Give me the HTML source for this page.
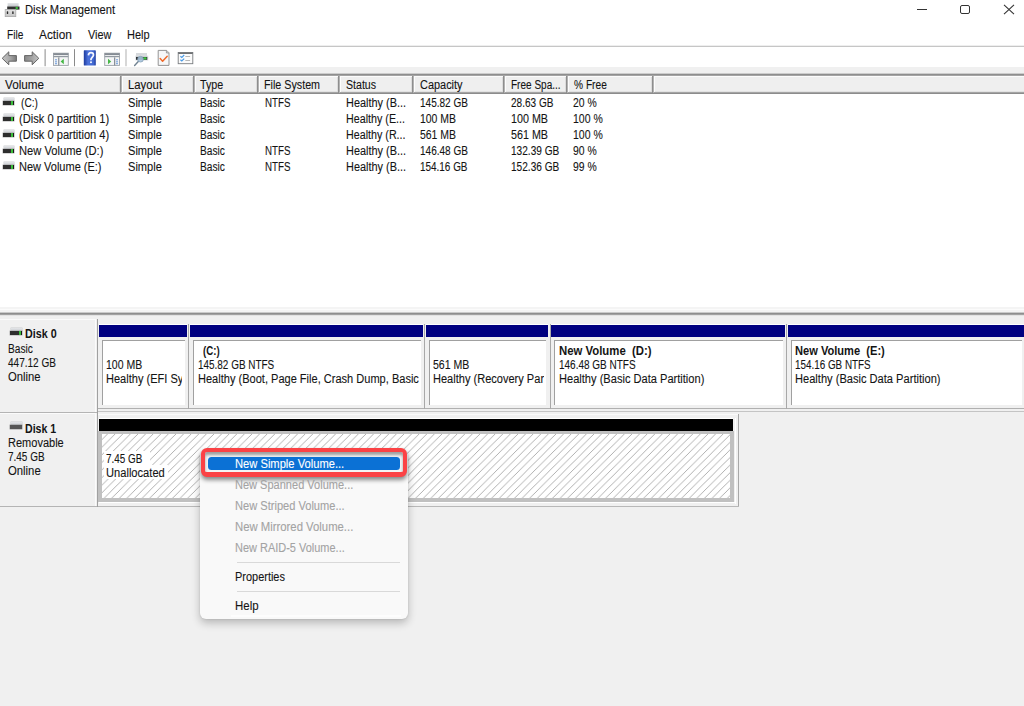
<!DOCTYPE html>
<html><head><meta charset="utf-8">
<style>
*{margin:0;padding:0;box-sizing:border-box}
html,body{width:1024px;height:706px;overflow:hidden;background:#f0f0f0;font-family:"Liberation Sans",sans-serif;color:#000}
.a{position:absolute}
.t{position:absolute;font-size:12px;line-height:14px;white-space:pre;color:#141414;-webkit-text-stroke:0.1px currentColor}
.drv{position:absolute;width:11px;height:7px}
.drv:before{content:"";position:absolute;left:0.5px;top:0;width:10px;height:3.4px;background:linear-gradient(#e4e6e9,#c9ccd0);box-shadow:0 0 0 0.4px #c0c3c6}
.drv:after{content:"";position:absolute;left:0;top:3.4px;width:11px;height:3.6px;background:linear-gradient(90deg,#2e2e2e 0,#2e2e2e 72%,#3bbd3b 72%,#3bbd3b 89%,#1a1a1a 89%);box-shadow:0 0 0 0.4px #9a9a9a}
.drv.rm:after{background:#555;box-shadow:0 0 0 0.4px #8a8a8a}
.drv.lb{width:12px}
.drv.lb:before{width:11px}
.drv.lb:after{width:12px}
</style></head>
<body>
<div class="a" style="left:0px;top:0px;width:1024px;height:46px;background:#fff;"></div>
<div class="t" style="left:25.40px;top:3.24px;transform:scaleX(0.9313);transform-origin:0 0;">Disk Management</div>
<div class="a" style="left:917px;top:9px;width:10px;height:1px;background:#333;"></div>
<div class="a" style="left:960px;top:5px;width:10px;height:9px;border:1px solid #333;border-radius:2px"></div>
<svg class="a" style="left:1003px;top:4px" width="12" height="11"><path d="M1 0.8L11 10.2M11 0.8L1 10.2" stroke="#333" stroke-width="1.1"/></svg>
<svg class="a" style="left:4px;top:2px" width="17" height="16" viewBox="0 0 17 16">
<defs><linearGradient id="tg" x1="0" y1="0" x2="0" y2="1"><stop offset="0" stop-color="#e6e8ea"/><stop offset="1" stop-color="#c2c5c9"/></linearGradient>
<linearGradient id="bg2" x1="0" y1="0" x2="0" y2="1"><stop offset="0" stop-color="#e2e2e2"/><stop offset="1" stop-color="#c4c4c4"/></linearGradient></defs>
<rect x="3.6" y="1" width="11" height="3.5" fill="url(#tg)"/>
<rect x="3.2" y="4.5" width="12.3" height="3.1" fill="#303030"/>
<rect x="11.6" y="4.9" width="2.2" height="2.4" fill="#3ab83a"/>
<rect x="1.2" y="7.6" width="10.6" height="7" fill="url(#bg2)" stroke="#a8a8a8" stroke-width="0.8"/>
<rect x="2.8" y="9.2" width="1.4" height="2.8" rx="0.6" fill="#2a2a2a"/>
<rect x="8.2" y="9.2" width="1.4" height="2.8" rx="0.6" fill="#2a2a2a"/>
</svg>
<div class="t" style="left:7.00px;top:28.14px;transform:scaleX(0.8465);transform-origin:0 0;">File</div>
<div class="t" style="left:39.00px;top:28.14px;transform:scaleX(0.9858);transform-origin:0 0;">Action</div>
<div class="t" style="left:87.50px;top:28.14px;transform:scaleX(0.9082);transform-origin:0 0;">View</div>
<div class="t" style="left:126.60px;top:28.14px;transform:scaleX(0.9178);transform-origin:0 0;">Help</div>
<div class="a" style="left:0px;top:45px;width:1024px;height:1px;background:#eeeeee;"></div>
<div class="a" style="left:0px;top:46px;width:1024px;height:1px;background:#c6c6c6;"></div>
<div class="a" style="left:0px;top:47px;width:1024px;height:20px;background:#fff;"></div>
<div class="a" style="left:0px;top:67px;width:1024px;height:7px;background:#f0f0f0;"></div>
<div class="a" style="left:0px;top:73px;width:1024px;height:1px;background:#cccccc;"></div>
<div class="a" style="left:0px;top:74px;width:1024px;height:1px;background:#8e8e8e;"></div>
<div class="a" style="left:0px;top:75px;width:1024px;height:1px;background:#a4a4a4;"></div>
<svg class="a" style="left:0;top:47px" width="200" height="21" viewBox="0 47 200 21">
<defs>
<linearGradient id="agl" x1="0" y1="0" x2="1" y2="0"><stop offset="0" stop-color="#c4c4c4"/><stop offset="0.55" stop-color="#a8a8a8"/><stop offset="1" stop-color="#7a7a7a"/></linearGradient>
<linearGradient id="agr" x1="0" y1="0" x2="1" y2="0"><stop offset="0" stop-color="#8a8a8a"/><stop offset="0.45" stop-color="#a0a0a0"/><stop offset="1" stop-color="#c4c4c4"/></linearGradient>
<linearGradient id="ag" x1="0" y1="0" x2="0" y2="1"><stop offset="0" stop-color="#b4b4b4"/><stop offset="0.5" stop-color="#8e8e8e"/><stop offset="1" stop-color="#a8a8a8"/></linearGradient>
<linearGradient id="hg" x1="0" y1="0" x2="1" y2="0"><stop offset="0" stop-color="#1c3a9c"/><stop offset="0.35" stop-color="#4c72dc"/><stop offset="0.8" stop-color="#4068d0"/><stop offset="1" stop-color="#1f3c9e"/></linearGradient>
</defs>
<path d="M2.2 58.3L8.8 51.8V55.6H16.4V61.2H8.8V64.8Z" fill="url(#agl)" stroke="#666" stroke-width="1" stroke-linejoin="round"/>
<path d="M38.8 58.3L32.2 51.8V55.6H24.6V61.2H32.2V64.8Z" fill="url(#agr)" stroke="#666" stroke-width="1" stroke-linejoin="round"/>
<rect x="44.6" y="49.2" width="1" height="17" fill="#8a8a8a"/>
<g>
<rect x="53.5" y="53.2" width="14.8" height="12.2" fill="#f4f5f6" stroke="#9ca2a8" stroke-width="0.9"/>
<rect x="53.5" y="53.2" width="14.8" height="1.8" fill="#848b93"/>
<rect x="53.5" y="55.9" width="14.8" height="1.3" fill="#9299a1"/>
<rect x="58.3" y="57.4" width="1" height="8" fill="#6f7781"/>
<rect x="55" y="59.4" width="2" height="0.9" fill="#5b8fd6"/>
<rect x="55" y="61.4" width="2" height="0.9" fill="#5b8fd6"/>
<rect x="55" y="63.3" width="2" height="0.9" fill="#5b8fd6"/>
<path d="M60.6 61.5L63.8 58.8V64.2Z" fill="#46b846"/>
</g>
<rect x="74" y="49.2" width="1" height="17" fill="#8a8a8a"/>
<rect x="83.8" y="50.3" width="12" height="15.2" rx="0.6" fill="url(#hg)"/>
<path d="M88.4 55.4C88.5 53.5 89.7 52.6 91 52.6C92.5 52.6 93.5 53.6 93.5 55C93.5 56.7 91.2 57.3 91 59.2V60.3" fill="none" stroke="#f4f6ff" stroke-width="1.7"/>
<circle cx="91" cy="62.3" r="1.05" fill="#f4f6ff"/>
<g>
<rect x="104.7" y="53.2" width="14.8" height="12.2" fill="#f4f5f6" stroke="#9ca2a8" stroke-width="0.9"/>
<rect x="104.7" y="53.2" width="14.8" height="1.8" fill="#848b93"/>
<rect x="104.7" y="55.9" width="14.8" height="1.3" fill="#9299a1"/>
<rect x="114.2" y="57.4" width="1" height="8" fill="#6f7781"/>
<rect x="116" y="59.4" width="2" height="0.9" fill="#5b8fd6"/>
<rect x="116" y="61.4" width="2" height="0.9" fill="#5b8fd6"/>
<rect x="116" y="63.3" width="2" height="0.9" fill="#5b8fd6"/>
<path d="M111.2 61.5L108 58.8V64.2Z" fill="#46b846"/>
</g>
<rect x="125.5" y="49.2" width="1" height="17" fill="#b0b0b0"/>
<g>
<rect x="136" y="53" width="11" height="3.2" fill="#d6d9dc"/>
<rect x="135.3" y="55.6" width="13" height="5" fill="#dfe2e5"/>
<rect x="136" y="56.9" width="11.3" height="2.9" fill="#2f3336"/>
<rect x="143.2" y="57.3" width="3.4" height="2.1" rx="0.8" fill="#3cc83c"/>
<line x1="138.3" y1="61.5" x2="134.6" y2="65.4" stroke="#718392" stroke-width="1.4" stroke-linecap="round"/>
<circle cx="140.5" cy="59.2" r="2.9" fill="#a7c4dc" fill-opacity="0.88" stroke="#7591aa" stroke-width="0.6"/>
</g>
<g>
<path d="M158.2 50.4H166.6L169 52.8V65.4H158.2Z" fill="#f6f7f8" stroke="#8a8a8a" stroke-width="0.9"/>
<path d="M166.4 50.4V53H169" fill="#d0d0d0" stroke="#8a8a8a" stroke-width="0.7"/>
<path d="M160.2 58.6L162.6 61.2L167.2 56.2" fill="none" stroke="#f06a2a" stroke-width="1.5" stroke-linecap="round" stroke-linejoin="round"/>
</g>
<g>
<rect x="178.2" y="52.5" width="14.6" height="11.2" fill="#fbfbfb" stroke="#7a7d80" stroke-width="0.9"/>
<rect x="178.2" y="52.5" width="14.6" height="1.5" fill="#6d7073"/>
<path d="M180.4 56.2L181.8 57.4L184.2 55" fill="none" stroke="#4a9be6" stroke-width="1.2"/>
<path d="M180.4 59.8L181.8 61L184.2 58.6" fill="none" stroke="#4a9be6" stroke-width="1.2"/>
<rect x="185.3" y="56.2" width="4.8" height="0.7" fill="#9a9a9a"/>
<rect x="185.3" y="60" width="4.8" height="0.7" fill="#9a9a9a"/>
</g>
</svg>
<div class="a" style="left:0px;top:76px;width:1024px;height:17px;background:#efefef;"></div>
<div class="a" style="left:0px;top:76px;width:1024px;height:1px;background:#fcfcfc;"></div>
<div class="a" style="left:0px;top:91px;width:1024px;height:1px;background:#e2e2e2;"></div>
<div class="a" style="left:0px;top:92px;width:1024px;height:1px;background:#a4a4a4;"></div>
<div class="a" style="left:0px;top:93px;width:1024px;height:1px;background:#8c8c8c;"></div>
<div class="a" style="left:119px;top:77px;width:1px;height:15px;background:#dcdcdc;"></div>
<div class="a" style="left:120px;top:76px;width:1px;height:17px;background:#8e8e8e;"></div>
<div class="a" style="left:121px;top:76px;width:1px;height:17px;background:#b4b4b4;"></div>
<div class="a" style="left:122px;top:77px;width:1px;height:15px;background:#fdfdfd;"></div>
<div class="a" style="left:192px;top:77px;width:1px;height:15px;background:#dcdcdc;"></div>
<div class="a" style="left:193px;top:76px;width:1px;height:17px;background:#8e8e8e;"></div>
<div class="a" style="left:194px;top:76px;width:1px;height:17px;background:#b4b4b4;"></div>
<div class="a" style="left:195px;top:77px;width:1px;height:15px;background:#fdfdfd;"></div>
<div class="a" style="left:256px;top:77px;width:1px;height:15px;background:#dcdcdc;"></div>
<div class="a" style="left:257px;top:76px;width:1px;height:17px;background:#8e8e8e;"></div>
<div class="a" style="left:258px;top:76px;width:1px;height:17px;background:#b4b4b4;"></div>
<div class="a" style="left:259px;top:77px;width:1px;height:15px;background:#fdfdfd;"></div>
<div class="a" style="left:337px;top:77px;width:1px;height:15px;background:#dcdcdc;"></div>
<div class="a" style="left:338px;top:76px;width:1px;height:17px;background:#8e8e8e;"></div>
<div class="a" style="left:339px;top:76px;width:1px;height:17px;background:#b4b4b4;"></div>
<div class="a" style="left:340px;top:77px;width:1px;height:15px;background:#fdfdfd;"></div>
<div class="a" style="left:411px;top:77px;width:1px;height:15px;background:#dcdcdc;"></div>
<div class="a" style="left:412px;top:76px;width:1px;height:17px;background:#8e8e8e;"></div>
<div class="a" style="left:413px;top:76px;width:1px;height:17px;background:#b4b4b4;"></div>
<div class="a" style="left:414px;top:77px;width:1px;height:15px;background:#fdfdfd;"></div>
<div class="a" style="left:502px;top:77px;width:1px;height:15px;background:#dcdcdc;"></div>
<div class="a" style="left:503px;top:76px;width:1px;height:17px;background:#8e8e8e;"></div>
<div class="a" style="left:504px;top:76px;width:1px;height:17px;background:#b4b4b4;"></div>
<div class="a" style="left:505px;top:77px;width:1px;height:15px;background:#fdfdfd;"></div>
<div class="a" style="left:565px;top:77px;width:1px;height:15px;background:#dcdcdc;"></div>
<div class="a" style="left:566px;top:76px;width:1px;height:17px;background:#8e8e8e;"></div>
<div class="a" style="left:567px;top:76px;width:1px;height:17px;background:#b4b4b4;"></div>
<div class="a" style="left:568px;top:77px;width:1px;height:15px;background:#fdfdfd;"></div>
<div class="a" style="left:651px;top:77px;width:1px;height:15px;background:#dcdcdc;"></div>
<div class="a" style="left:652px;top:76px;width:1px;height:17px;background:#8e8e8e;"></div>
<div class="a" style="left:653px;top:76px;width:1px;height:17px;background:#b4b4b4;"></div>
<div class="a" style="left:654px;top:77px;width:1px;height:15px;background:#fdfdfd;"></div>
<div class="t" style="left:4.70px;top:78.14px;transform:scaleX(0.9775);transform-origin:0 0;">Volume</div>
<div class="t" style="left:127.60px;top:78.14px;transform:scaleX(0.9444);transform-origin:0 0;">Layout</div>
<div class="t" style="left:200.20px;top:78.14px;transform:scaleX(0.8962);transform-origin:0 0;">Type</div>
<div class="t" style="left:264.00px;top:78.14px;transform:scaleX(0.8942);transform-origin:0 0;">File System</div>
<div class="t" style="left:346.00px;top:78.14px;transform:scaleX(0.8824);transform-origin:0 0;">Status</div>
<div class="t" style="left:419.60px;top:78.14px;transform:scaleX(0.9112);transform-origin:0 0;">Capacity</div>
<div class="t" style="left:510.70px;top:78.14px;transform:scaleX(0.8354);transform-origin:0 0;">Free Spa...</div>
<div class="t" style="left:573.50px;top:78.14px;transform:scaleX(0.8492);transform-origin:0 0;">% Free</div>
<div class="a" style="left:0px;top:94px;width:1024px;height:213px;background:#fff;"></div>
<div class="drv" style="left:3px;top:98px"></div>
<div class="t" style="left:21.25px;top:96.04px;transform:scaleX(0.8450);transform-origin:0 0;">(C:)</div>
<div class="t" style="left:127.50px;top:96.04px;transform:scaleX(0.9215);transform-origin:0 0;">Simple</div>
<div class="t" style="left:200.20px;top:96.04px;transform:scaleX(0.8477);transform-origin:0 0;">Basic</div>
<div class="t" style="left:264.50px;top:96.04px;transform:scaleX(0.8127);transform-origin:0 0;">NTFS</div>
<div class="t" style="left:346.20px;top:96.04px;transform:scaleX(0.9091);transform-origin:0 0;">Healthy (B...</div>
<div class="t" style="left:419.50px;top:96.04px;transform:scaleX(0.8366);transform-origin:0 0;">145.82 GB</div>
<div class="t" style="left:510.50px;top:96.04px;transform:scaleX(0.8374);transform-origin:0 0;">28.63 GB</div>
<div class="t" style="left:573.30px;top:96.04px;transform:scaleX(0.8676);transform-origin:0 0;">20 %</div>
<div class="drv" style="left:3px;top:114px"></div>
<div class="t" style="left:18.50px;top:112.04px;transform:scaleX(0.9268);transform-origin:0 0;">(Disk 0 partition 1)</div>
<div class="t" style="left:127.50px;top:112.04px;transform:scaleX(0.9215);transform-origin:0 0;">Simple</div>
<div class="t" style="left:200.20px;top:112.04px;transform:scaleX(0.8477);transform-origin:0 0;">Basic</div>
<div class="t" style="left:346.20px;top:112.04px;transform:scaleX(0.8939);transform-origin:0 0;">Healthy (E...</div>
<div class="t" style="left:419.50px;top:112.04px;transform:scaleX(0.8701);transform-origin:0 0;">100 MB</div>
<div class="t" style="left:510.50px;top:112.04px;transform:scaleX(0.8943);transform-origin:0 0;">100 MB</div>
<div class="t" style="left:573.30px;top:112.04px;transform:scaleX(0.8750);transform-origin:0 0;">100 %</div>
<div class="drv" style="left:3px;top:130px"></div>
<div class="t" style="left:18.50px;top:128.04px;transform:scaleX(0.9268);transform-origin:0 0;">(Disk 0 partition 4)</div>
<div class="t" style="left:127.50px;top:128.04px;transform:scaleX(0.9215);transform-origin:0 0;">Simple</div>
<div class="t" style="left:200.20px;top:128.04px;transform:scaleX(0.8477);transform-origin:0 0;">Basic</div>
<div class="t" style="left:346.20px;top:128.04px;transform:scaleX(0.8931);transform-origin:0 0;">Healthy (R...</div>
<div class="t" style="left:419.50px;top:128.04px;transform:scaleX(0.8701);transform-origin:0 0;">561 MB</div>
<div class="t" style="left:510.50px;top:128.04px;transform:scaleX(0.8943);transform-origin:0 0;">561 MB</div>
<div class="t" style="left:573.30px;top:128.04px;transform:scaleX(0.8750);transform-origin:0 0;">100 %</div>
<div class="drv" style="left:3px;top:146px"></div>
<div class="t" style="left:18.75px;top:144.04px;transform:scaleX(0.9300);transform-origin:0 0;">New Volume (D:)</div>
<div class="t" style="left:127.50px;top:144.04px;transform:scaleX(0.9215);transform-origin:0 0;">Simple</div>
<div class="t" style="left:200.20px;top:144.04px;transform:scaleX(0.8477);transform-origin:0 0;">Basic</div>
<div class="t" style="left:264.50px;top:144.04px;transform:scaleX(0.8127);transform-origin:0 0;">NTFS</div>
<div class="t" style="left:346.20px;top:144.04px;transform:scaleX(0.9091);transform-origin:0 0;">Healthy (B...</div>
<div class="t" style="left:419.50px;top:144.04px;transform:scaleX(0.8366);transform-origin:0 0;">146.48 GB</div>
<div class="t" style="left:510.50px;top:144.04px;transform:scaleX(0.8410);transform-origin:0 0;">132.39 GB</div>
<div class="t" style="left:573.30px;top:144.04px;transform:scaleX(0.8676);transform-origin:0 0;">90 %</div>
<div class="drv" style="left:3px;top:162px"></div>
<div class="t" style="left:18.75px;top:160.04px;transform:scaleX(0.9167);transform-origin:0 0;">New Volume (E:)</div>
<div class="t" style="left:127.50px;top:160.04px;transform:scaleX(0.9215);transform-origin:0 0;">Simple</div>
<div class="t" style="left:200.20px;top:160.04px;transform:scaleX(0.8477);transform-origin:0 0;">Basic</div>
<div class="t" style="left:264.50px;top:160.04px;transform:scaleX(0.8127);transform-origin:0 0;">NTFS</div>
<div class="t" style="left:346.20px;top:160.04px;transform:scaleX(0.9091);transform-origin:0 0;">Healthy (B...</div>
<div class="t" style="left:419.50px;top:160.04px;transform:scaleX(0.8279);transform-origin:0 0;">154.16 GB</div>
<div class="t" style="left:510.50px;top:160.04px;transform:scaleX(0.8410);transform-origin:0 0;">152.36 GB</div>
<div class="t" style="left:573.30px;top:160.04px;transform:scaleX(0.8676);transform-origin:0 0;">99 %</div>
<div class="a" style="left:0px;top:307px;width:1024px;height:6px;background:#f4f4f4;"></div>
<div class="a" style="left:0px;top:309px;width:1024px;height:1px;background:#fbfbfb;"></div>
<div class="a" style="left:0px;top:312px;width:1024px;height:1px;background:#cacaca;"></div>
<div class="a" style="left:0px;top:313px;width:1024px;height:1px;background:#8e8e8e;"></div>
<div class="a" style="left:0px;top:314px;width:1024px;height:1px;background:#a2a2a2;"></div>
<div class="a" style="left:0px;top:315px;width:1024px;height:1px;background:#e2e2e2;"></div>
<div class="a" style="left:0px;top:319px;width:96px;height:1px;background:#fbfbfb;"></div>
<div class="a" style="left:95px;top:319px;width:1px;height:93px;background:#fbfbfb;"></div>
<div class="a" style="left:97px;top:319px;width:1px;height:94px;background:#a0a0a0;"></div>
<div class="a" style="left:0px;top:412px;width:97px;height:1px;background:#b4b4b4;"></div>
<div class="drv lb" style="left:10px;top:328px"></div>
<div class="t" style="left:25.30px;top:327.24px;font-weight:bold;-webkit-text-stroke:0;transform:scaleX(0.8961);transform-origin:0 0;">Disk 0</div>
<div class="t" style="left:7.90px;top:341.64px;transform:scaleX(0.8443);transform-origin:0 0;">Basic</div>
<div class="t" style="left:7.50px;top:355.84px;transform:scaleX(0.8366);transform-origin:0 0;">447.12 GB</div>
<div class="t" style="left:8.00px;top:369.94px;transform:scaleX(0.9381);transform-origin:0 0;">Online</div>
<div class="a" style="left:98px;top:408px;width:926px;height:1px;background:#b0b0b0;"></div>
<div class="a" style="left:98px;top:411px;width:926px;height:1px;background:#c4c4c4;"></div>
<div class="a" style="left:99px;top:324px;width:88px;height:1px;background:#fff;"></div>
<div class="a" style="left:99px;top:325px;width:88px;height:12px;background:#000080;"></div>
<div class="a" style="left:102px;top:340px;width:83px;height:65px;background:#fff;border-top:1px solid #a0a0a0;border-left:1px solid #a0a0a0"></div>
<div class="a" style="left:190px;top:324px;width:233px;height:1px;background:#fff;"></div>
<div class="a" style="left:190px;top:325px;width:233px;height:12px;background:#000080;"></div>
<div class="a" style="left:193px;top:340px;width:228px;height:65px;background:#fff;border-top:1px solid #a0a0a0;border-left:1px solid #a0a0a0"></div>
<div class="a" style="left:426px;top:324px;width:122px;height:1px;background:#fff;"></div>
<div class="a" style="left:426px;top:325px;width:122px;height:12px;background:#000080;"></div>
<div class="a" style="left:429px;top:340px;width:117px;height:65px;background:#fff;border-top:1px solid #a0a0a0;border-left:1px solid #a0a0a0"></div>
<div class="a" style="left:551px;top:324px;width:234px;height:1px;background:#fff;"></div>
<div class="a" style="left:551px;top:325px;width:234px;height:12px;background:#000080;"></div>
<div class="a" style="left:554px;top:340px;width:229px;height:65px;background:#fff;border-top:1px solid #a0a0a0;border-left:1px solid #a0a0a0"></div>
<div class="a" style="left:788px;top:324px;width:236px;height:1px;background:#fff;"></div>
<div class="a" style="left:788px;top:325px;width:236px;height:12px;background:#000080;"></div>
<div class="a" style="left:791px;top:340px;width:231px;height:65px;background:#fff;border-top:1px solid #a0a0a0;border-left:1px solid #a0a0a0"></div>
<div class="a" style="left:188px;top:324px;width:1px;height:85px;background:#a8a8a8;"></div>
<div class="a" style="left:424px;top:324px;width:1px;height:85px;background:#a8a8a8;"></div>
<div class="a" style="left:550px;top:324px;width:1px;height:85px;background:#a8a8a8;"></div>
<div class="a" style="left:786px;top:324px;width:1px;height:85px;background:#a8a8a8;"></div>
<div class="t" style="left:106.20px;top:357.84px;transform:scaleX(0.8749);transform-origin:0 0;">100 MB</div>
<div class="a" style="left:105.20px;top:369.94px;width:77.00px;height:18px;overflow:hidden"><div class="t" style="left:1.00px;top:2px;transform:scaleX(0.9200);transform-origin:0 0;">Healthy (EFI System Partition)</div></div>
<div class="t" style="left:202.70px;top:343.64px;font-weight:bold;-webkit-text-stroke:0;transform:scaleX(0.8048);transform-origin:0 0;">(C:)</div>
<div class="t" style="left:197.60px;top:357.74px;transform:scaleX(0.8283);transform-origin:0 0;">145.82 GB NTFS</div>
<div class="a" style="left:196.60px;top:369.84px;width:223.00px;height:18px;overflow:hidden"><div class="t" style="left:1.00px;top:2px;transform:scaleX(0.9200);transform-origin:0 0;">Healthy (Boot, Page File, Crash Dump, Basic Data Partition)</div></div>
<div class="t" style="left:433.00px;top:357.74px;transform:scaleX(0.8798);transform-origin:0 0;">561 MB</div>
<div class="a" style="left:432.00px;top:369.84px;width:112.00px;height:18px;overflow:hidden"><div class="t" style="left:1.00px;top:2px;transform:scaleX(0.9200);transform-origin:0 0;">Healthy (Recovery Partition)</div></div>
<div class="t" style="left:558.60px;top:343.84px;font-weight:bold;-webkit-text-stroke:0;transform:scaleX(0.9473);transform-origin:0 0;">New Volume  (D:)</div>
<div class="t" style="left:558.60px;top:358.04px;transform:scaleX(0.8326);transform-origin:0 0;">146.48 GB NTFS</div>
<div class="t" style="left:558.60px;top:371.94px;transform:scaleX(0.9233);transform-origin:0 0;">Healthy (Basic Data Partition)</div>
<div class="t" style="left:795.20px;top:343.84px;font-weight:bold;-webkit-text-stroke:0;transform:scaleX(0.9246);transform-origin:0 0;">New Volume  (E:)</div>
<div class="t" style="left:795.20px;top:358.04px;transform:scaleX(0.8217);transform-origin:0 0;">154.16 GB NTFS</div>
<div class="t" style="left:795.20px;top:371.94px;transform:scaleX(0.9245);transform-origin:0 0;">Healthy (Basic Data Partition)</div>
<div class="a" style="left:0px;top:413px;width:96px;height:1px;background:#fbfbfb;"></div>
<div class="a" style="left:95px;top:413px;width:1px;height:93px;background:#fbfbfb;"></div>
<div class="a" style="left:97px;top:413px;width:1px;height:94px;background:#a0a0a0;"></div>
<div class="a" style="left:0px;top:506px;width:97px;height:1px;background:#b4b4b4;"></div>
<div class="drv lb rm" style="left:10px;top:422px"></div>
<div class="t" style="left:25.00px;top:421.94px;font-weight:bold;-webkit-text-stroke:0;transform:scaleX(0.8834);transform-origin:0 0;">Disk 1</div>
<div class="t" style="left:8.00px;top:435.74px;transform:scaleX(0.9177);transform-origin:0 0;">Removable</div>
<div class="t" style="left:8.00px;top:449.94px;transform:scaleX(0.8295);transform-origin:0 0;">7.45 GB</div>
<div class="t" style="left:8.00px;top:463.94px;transform:scaleX(0.9424);transform-origin:0 0;">Online</div>
<div class="a" style="left:98px;top:414px;width:640px;height:1px;background:#fafafa;"></div>
<div class="a" style="left:738px;top:414px;width:1px;height:92px;background:#a8a8a8;"></div>
<div class="a" style="left:98px;top:506px;width:641px;height:1px;background:#b8b8b8;"></div>
<div class="a" style="left:99px;top:418px;width:634px;height:1px;background:#fff;"></div>
<div class="a" style="left:735px;top:418px;width:1px;height:86px;background:#fff;"></div>
<div class="a" style="left:99px;top:502px;width:636px;height:1px;background:#fff;"></div>
<div class="a" style="left:99px;top:419px;width:634px;height:12px;background:#000;"></div>
<div class="a" style="left:98px;top:431px;width:636px;height:71px;background:#c0c0c0;"></div>
<svg class="a" style="left:102px;top:434px" width="628" height="64"><defs><pattern id="h" x="5.5" width="7.6" height="7.6" patternUnits="userSpaceOnUse"><path d="M-2 2L2 -2M0 7.6L7.6 0M5.6 9.6L9.6 5.6" stroke="#a8a8a8" stroke-width="0.9"/></pattern></defs><rect width="628" height="64" fill="#fff"/><rect width="628" height="64" fill="url(#h)"/></svg>
<div class="a" style="left:104px;top:451px;width:46px;height:14px;background:#fff;"></div>
<div class="a" style="left:104px;top:465px;width:63.5px;height:14px;background:#fff;"></div>
<div class="t" style="left:106.25px;top:451.54px;transform:scaleX(0.8239);transform-origin:0 0;">7.45 GB</div>
<div class="t" style="left:106.25px;top:465.94px;transform:scaleX(0.9270);transform-origin:0 0;">Unallocated</div>
<div class="a" style="left:199.5px;top:450px;width:208px;height:168.5px;background:#f9f9f9;border-radius:6px;box-shadow:0 4px 8px rgba(0,0,0,0.24),0 0 2px rgba(0,0,0,0.12)"></div>
<div class="a" style="left:200.5px;top:447.7px;width:206.5px;height:29px;border:4.4px solid #fb4245;border-bottom-width:5.4px;border-radius:6px;background:#f4f4f4;box-shadow:0 3px 4px rgba(0,0,0,0.45), inset 0 3px 3px rgba(0,0,0,0.35)"></div>
<div class="a" style="left:208px;top:456.8px;width:191.5px;height:13.5px;background:#0b71d5;border-radius:3.5px"></div>
<div class="t" style="left:235.30px;top:456.74px;color:#fff;transform:scaleX(0.9304);transform-origin:0 0;">New Simple Volume...</div>
<div class="t" style="left:235.30px;top:477.84px;color:#a3a3a3;transform:scaleX(0.9188);transform-origin:0 0;">New Spanned Volume...</div>
<div class="t" style="left:235.30px;top:498.74px;color:#a3a3a3;transform:scaleX(0.9238);transform-origin:0 0;">New Striped Volume...</div>
<div class="t" style="left:235.30px;top:519.64px;color:#a3a3a3;transform:scaleX(0.9436);transform-origin:0 0;">New Mirrored Volume...</div>
<div class="t" style="left:235.30px;top:540.54px;color:#a3a3a3;transform:scaleX(0.9142);transform-origin:0 0;">New RAID-5 Volume...</div>
<div class="a" style="left:237px;top:562px;width:163px;height:1px;background:#d9d9d9;"></div>
<div class="t" style="left:235.30px;top:570.24px;transform:scaleX(0.9132);transform-origin:0 0;">Properties</div>
<div class="a" style="left:237px;top:591px;width:163px;height:1px;background:#d9d9d9;"></div>
<div class="a" style="left:231px;top:614.5px;width:170px;height:2px;background:#fdfdfd;"></div>
<div class="t" style="left:235.30px;top:599.44px;transform:scaleX(0.9543);transform-origin:0 0;">Help</div>
</body></html>
